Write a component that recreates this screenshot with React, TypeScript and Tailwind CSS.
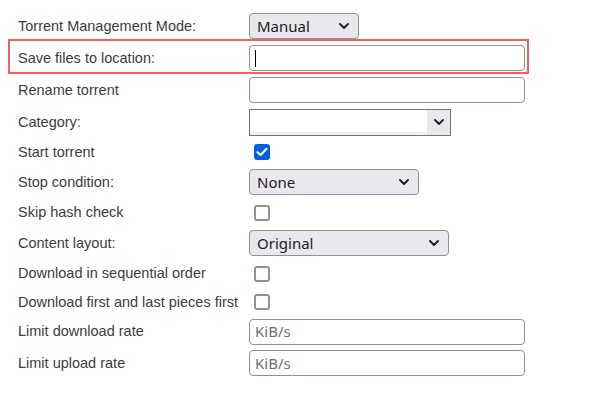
import React from "react";

const Chevron = () => (
  <svg width="10" height="6" viewBox="0 0 10 6" fill="none">
    <path d="M1 1 L5 5 L9 1" stroke="#1b1b1b" strokeWidth="1.8" strokeLinecap="round" strokeLinejoin="round" />
  </svg>
);

const Select = ({ value, w }: { value: string; w: string }) => (
  <div
    className={`${w} h-[26px] flex items-center justify-between pl-[7px] pr-[9px] rounded-[4px] border border-[#8f8f9d] bg-[#e9e9ed] text-[15px] text-[#1b1b1b]`}
    style={{ fontFamily: '"Noto Sans", sans-serif' }}
  >
    <span className="leading-none">{value}</span>
    <Chevron />
  </div>
);

const Input = ({ placeholder, caret }: { placeholder?: string; caret?: boolean }) => (
  <div
    className="w-[276px] h-[26px] flex items-center pl-[5px] rounded-[4px] border border-[#8f8f9d] bg-white text-[15px] text-[#6f6f78]"
    style={{ fontFamily: '"Noto Sans", sans-serif' }}
  >
    {caret && <span className="w-[1px] h-[17px] bg-black" />}
    {placeholder && <span className="leading-none">{placeholder}</span>}
  </div>
);

const Checkbox = ({ checked }: { checked?: boolean }) =>
  checked ? (
    <div className="ml-[5px] w-[16px] h-[16px] rounded-[3px] bg-[#0060df] flex items-center justify-center">
      <svg width="12" height="10" viewBox="0 0 12 10" fill="none">
        <path d="M1.5 5.2 L4.6 8 L10.5 1.8" stroke="white" strokeWidth="2.2" strokeLinecap="round" strokeLinejoin="round" />
      </svg>
    </div>
  ) : (
    <div className="ml-[5px] w-[16px] h-[16px] rounded-[3px] border-2 border-[#8f8f9d] bg-white" />
  );

const Row = ({ label, h, children, highlight }: { label: string; h: string; children: React.ReactNode; highlight?: boolean }) => (
  <div className={`relative flex items-center ${h}`}>
    {highlight && (
      <div className="absolute left-[-10px] top-[-3px] w-[521px] h-[35px] border-2 border-[#f0605c] pointer-events-none" />
    )}
    <div className="w-[231px] text-[14.5px] text-[#3c3c3c] leading-none" style={{ fontFamily: '"Liberation Sans", Arial, sans-serif' }}>
      {label}
    </div>
    <div className="flex items-center">{children}</div>
  </div>
);

export default function App() {
  return (
    <div className="w-[591px] h-[401px] bg-white pt-[10px] pl-[18px]">
      <Row label="Torrent Management Mode:" h="h-[32px]">
        <Select value="Manual" w="w-[110px]" />
      </Row>
      <Row label="Save files to location:" h="h-[32px]" highlight>
        <Input caret />
      </Row>
      <Row label="Rename torrent" h="h-[32px]">
        <Input />
      </Row>
      <Row label="Category:" h="h-[32px]">
        <div className="w-[202px] h-[27px] flex border border-[#767676] bg-white">
          <div className="flex-1 flex flex-col justify-end">
            <div className="h-[3px] bg-[#f0f0f4]" />
          </div>
          <div className="w-[23px] bg-[#e9e9ed] flex items-center justify-center">
            <Chevron />
          </div>
        </div>
      </Row>
      <Row label="Start torrent" h="h-[28px]">
        <Checkbox checked />
      </Row>
      <Row label="Stop condition:" h="h-[32px]">
        <Select value="None" w="w-[170px]" />
      </Row>
      <Row label="Skip hash check" h="h-[29px]">
        <Checkbox />
      </Row>
      <Row label="Content layout:" h="h-[32px]">
        <Select value="Original" w="w-[200px]" />
      </Row>
      <Row label="Download in sequential order" h="h-[29px]">
        <Checkbox />
      </Row>
      <Row label="Download first and last pieces first" h="h-[28px]">
        <Checkbox />
      </Row>
      <Row label="Limit download rate" h="h-[31px]">
        <Input placeholder="KiB/s" />
      </Row>
      <Row label="Limit upload rate" h="h-[32px]">
        <Input placeholder="KiB/s" />
      </Row>
    </div>
  );
}
